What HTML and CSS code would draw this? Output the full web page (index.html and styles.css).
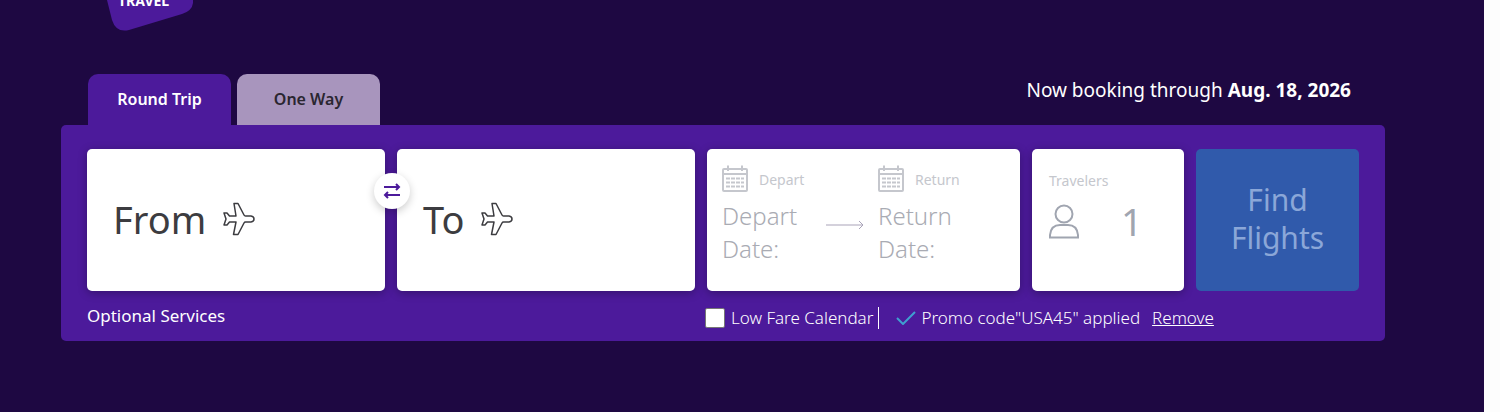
FILE: index.html
```html
<!DOCTYPE html>
<html lang="en">
<head>
    <meta charset="UTF-8">
    <meta name="viewport" content="width=device-width, initial-scale=1.0">
    <title>Book Flights</title>
    <link rel="stylesheet" href="styles.css">
</head>
<body>
    <main class="hero">
        <header class="header">
            <svg class="logo" viewBox="0 0 86 31" role="img" aria-label="Travel">
                <path d="M0 0 L5 20 Q9 33 22 30 L75 14 Q87 10 86 0 Z" fill="#4c1a9b"/>
                <text x="11" y="6" class="logo-text">TRAVEL</text>
            </svg>
        </header>

        <div class="booking">
            <div class="booking-top">
                <div class="tabs" role="tablist">
                    <button type="button" class="tab active" role="tab" aria-selected="true">Round Trip</button>
                    <button type="button" class="tab" role="tab" aria-selected="false">One Way</button>
                </div>
                <p class="notice">Now booking through <strong>Aug. 18, 2026</strong></p>
            </div>

            <form class="panel">
                <div class="fields">
                    <div class="card from">
                        <button type="button" class="place">
                            From
                            <svg class="plane" viewBox="0 0 32 34">
                                <path d="M11 1.5 H15 L21 13 Q21.500 14 22.500 14 H28 Q31 14.500 31 17 Q31 19.500 28 20 H22.500 Q21.500 20 21 21 L15 32.500 H10.500 L13 20 H6.500 L4 23 H1 L3 17 L1 11 H4 L6.500 14 H13 Z"/>
                            </svg>
                        </button>
                        <button type="button" class="swap" aria-label="Swap cities">
                            <svg viewBox="0 0 18 18">
                                <path d="M1 5 H16 M13 2 L16 5 L13 8 M17 13 H2 M5 10 L2 13 L5 16"/>
                            </svg>
                        </button>
                    </div>
                    <div class="card">
                        <button type="button" class="place">
                            To
                            <svg class="plane" viewBox="0 0 32 34">
                                <path d="M11 1.5 H15 L21 13 Q21.500 14 22.500 14 H28 Q31 14.500 31 17 Q31 19.500 28 20 H22.500 Q21.500 20 21 21 L15 32.500 H10.500 L13 20 H6.500 L4 23 H1 L3 17 L1 11 H4 L6.500 14 H13 Z"/>
                            </svg>
                        </button>
                    </div>
                    <div class="card dates">
                        <button type="button" class="date">
                            <span class="date-label">
                                <svg class="calendar" viewBox="0 0 26 28">
                                    <path d="M2 4 H24 Q25 4 25 5 V25 Q25 26 24 26 H2 Q1 26 1 25 V5 Q1 4 2 4 Z M1 9 H25 M6 0.500 V6 M20 0.500 V6"/>
                                    <path class="days" d="M4 13.500 H22 M4 17.500 H22 M4 21.500 H22"/>
                                </svg>
                                Depart
                            </span>
                            <span class="date-value">Depart Date:</span>
                        </button>
                        <svg class="arrow" viewBox="0 0 38 10">
                            <path d="M0 5 H37 M33 1 L37 5 L33 9"/>
                        </svg>
                        <button type="button" class="date">
                            <span class="date-label">
                                <svg class="calendar" viewBox="0 0 26 28">
                                    <path d="M2 4 H24 Q25 4 25 5 V25 Q25 26 24 26 H2 Q1 26 1 25 V5 Q1 4 2 4 Z M1 9 H25 M6 0.500 V6 M20 0.500 V6"/>
                                    <path class="days" d="M4 13.500 H22 M4 17.500 H22 M4 21.500 H22"/>
                                </svg>
                                Return
                            </span>
                            <span class="date-value">Return Date:</span>
                        </button>
                    </div>
                    <button type="button" class="card travelers">
                        <span class="travelers-label">Travelers</span>
                        <span class="travelers-row">
                            <svg class="person" viewBox="0 0 30 35">
                                <circle cx="15" cy="10" r="8.500"/>
                                <path d="M1 33.500 V31 Q2 21 11 21 H19 Q28 21 29 31 V33.500 Z"/>
                            </svg>
                            <span class="count">1</span>
                        </span>
                    </button>
                    <button type="submit" class="find" disabled>Find Flights</button>
                </div>

                <div class="options">
                    <span class="services">Optional Services</span>
                    <div class="extras">
                        <label class="low-fare">
                            <input type="checkbox">
                            Low Fare Calendar
                        </label>
                        <span class="promo">
                            <svg class="check" viewBox="0 0 20 14">
                                <path d="M1 7 L7 13 L19 1"/>
                            </svg>
                            Promo code"USA45" applied
                        </span>
                        <a href="#">Remove</a>
                    </div>
                </div>
            </form>
        </div>
    </main>
</body>
</html>
```
FILE: styles.css
```css
* {
    box-sizing: border-box;
}
body {
    margin: 0;
    padding-right: 16px;
    background-color: #fdfdfd;
    font-family: "Noto Sans", sans-serif;
}
button {
    font-family: inherit;
    border: none;
    background: none;
    padding: 0;
    color: inherit;
    text-align: left;
    cursor: pointer;
}
svg {
    display: block;
    fill: none;
}
.hero {
    min-height: 100vh;
    background-color: #1e0842;
    color: #ffffff;
}
.header {
    padding-left: 107px;
}
.logo {
    width: 86px;
    height: 31px;
}
.logo-text {
    fill: #ffffff;
    font-size: 14px;
    font-weight: 700;
}
.booking {
    padding: 43px 99px 0 61px;
}
.booking-top {
    display: flex;
    justify-content: space-between;
    padding: 0 34px 0 27px;
}
.tabs {
    display: flex;
    gap: 6px;
}
.tab {
    width: 143px;
    height: 51px;
    padding-bottom: 2px;
    border-radius: 10px 10px 0 0;
    background-color: #a895bd;
    color: #2a2630;
    font-size: 16px;
    font-weight: 600;
    text-align: center;
}
.tab.active {
    background-color: #4c1a9b;
    color: #ffffff;
}
.notice {
    margin: 0;
    font-size: 19px;
    line-height: 32px;
}
.panel {
    padding: 24px 26px 8px;
    border-radius: 5px;
    background-color: #4c1a9b;
}
.fields, .options {
    display: grid;
    grid-template-columns: 298fr 298fr 313fr 152fr 163fr;
    column-gap: 12px;
}
.card {
    position: relative;
    height: 142px;
    border-radius: 5px;
    background-color: #ffffff;
    box-shadow: 0 2px 10px rgba(0, 0, 0, 0.3);
}
.from {
    z-index: 1;
}
.place {
    display: flex;
    align-items: center;
    gap: 17px;
    width: 100%;
    height: 100%;
    padding: 0 0 3px 26px;
    color: #3c3c40;
    font-size: 38px;
}
.plane {
    width: 32px;
    height: 34px;
    stroke: #3c3c40;
    stroke-width: 1.5;
    stroke-linejoin: round;
}
.swap {
    position: absolute;
    top: 24px;
    right: -25px;
    display: flex;
    align-items: center;
    justify-content: center;
    width: 36px;
    height: 36px;
    border-radius: 50%;
    background-color: #ffffff;
    box-shadow: 0 3px 8px rgba(0, 0, 0, 0.2);
}
.swap svg {
    width: 18px;
    height: 18px;
    stroke: #4c1a9b;
    stroke-width: 2;
}
.dates {
    display: flex;
    padding: 15px;
}
.date {
    display: flex;
    flex-direction: column;
    gap: 5px;
    width: 104px;
    color: #a9abb3;
}
.date-label {
    display: flex;
    align-items: center;
    gap: 11px;
    height: 30px;
    color: #c5c7cd;
    font-size: 14px;
}
.calendar {
    width: 26px;
    height: 28px;
    stroke: #c5c7cd;
    stroke-width: 2;
}
.calendar .days {
    stroke-width: 2;
    stroke-dasharray: 4 1;
}
.date-value {
    width: 90px;
    font-size: 24px;
    font-weight: 300;
    line-height: 33px;
}
.arrow {
    align-self: center;
    width: 38px;
    height: 10px;
    margin: 10px 14px 0 0;
    stroke: #a9a3b8;
}
.travelers {
    display: flex;
    flex-direction: column;
    padding: 20px 17px;
    color: #a0a5b0;
}
.travelers-label {
    color: #c5c7cd;
    font-size: 14px;
    line-height: 24px;
}
.travelers-row {
    display: flex;
    align-items: center;
    gap: 42px;
}
.person {
    width: 30px;
    height: 35px;
    stroke: #a0a5b0;
    stroke-width: 2;
}
.count {
    font-size: 38px;
    line-height: 56px;
}
.find {
    padding: 0 30px 2px;
    border-radius: 5px;
    background-color: #305aab;
    color: #8ba7d8;
    font-size: 30px;
    line-height: 38px;
    text-align: center;
}
.options {
    margin-top: 10px;
    font-size: 17px;
    line-height: 30px;
}
.services {
    grid-column: span 2;
}
.extras {
    grid-column: span 3;
    display: flex;
    align-items: center;
    padding-top: 2px;
    font-weight: 350;
}
.low-fare {
    display: flex;
    align-items: center;
    gap: 6px;
    padding-right: 5px;
    border-right: 1px solid #ffffff;
    line-height: 22px;
}
.low-fare input {
    appearance: none;
    width: 20px;
    height: 20px;
    margin: 0 0 0 -2px;
    border: 1px solid #767676;
    border-radius: 2px;
    background-color: #ffffff;
}
.promo {
    display: flex;
    align-items: center;
    gap: 5px;
    margin: 0 12px 0 17px;
}
.check {
    width: 20px;
    height: 14px;
    stroke: #3f9fd0;
    stroke-width: 2;
}
.extras a {
    color: #ffffff;
}
```
